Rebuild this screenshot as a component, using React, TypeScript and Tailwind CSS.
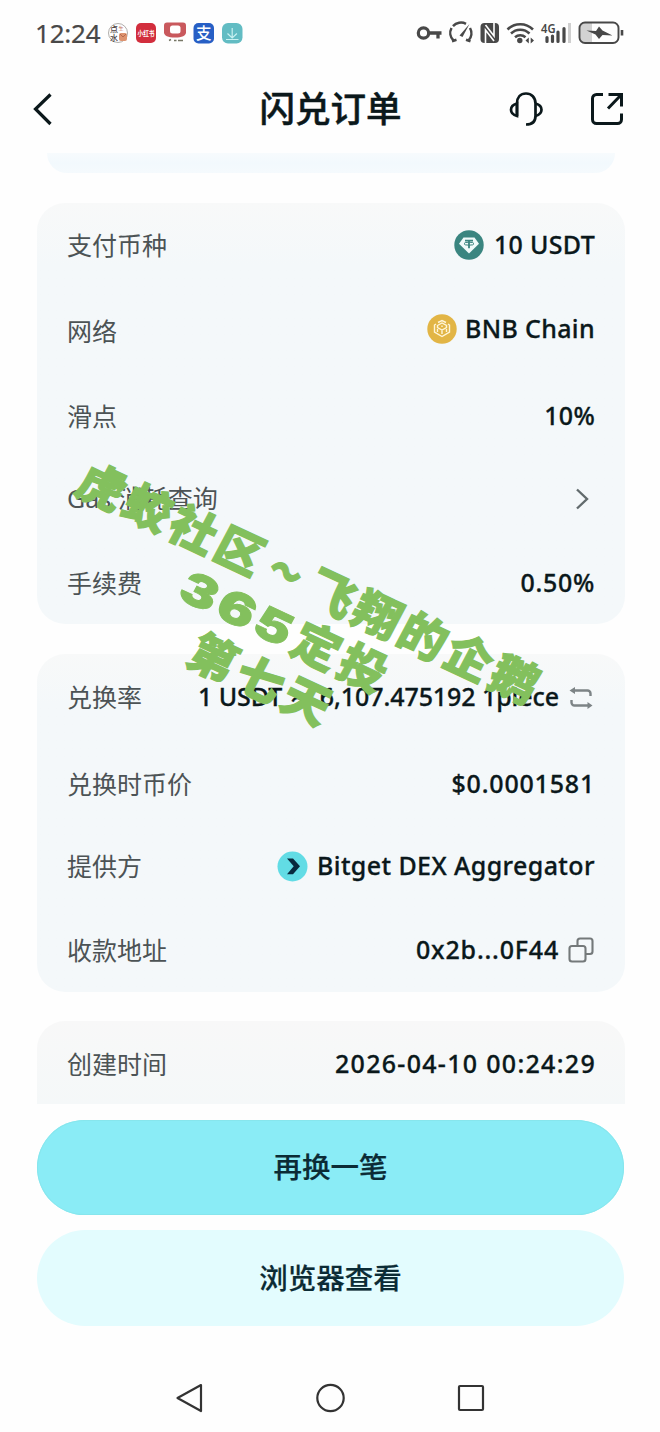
import type { ReactNode } from "react";

function Row({ label, h, children }: { label: string; h: string; children: ReactNode }) {
  return (
    <div className={`flex shrink-0 items-center justify-between ${h}`}>
      <span className="whitespace-nowrap text-[25px] leading-none text-[#4c5355]">{label}</span>
      <div className="-mt-px flex items-center whitespace-nowrap text-[25px] font-medium leading-none text-[#0b181b] [-webkit-text-stroke:0.3px]">
        {children}
      </div>
    </div>
  );
}

function StatusBar() {
  return (
    <div className="flex h-[66px] shrink-0 items-center pl-[35px] text-[#484848]">
      <span className="w-[72px] whitespace-nowrap font-['Noto_Sans'] text-[26px] leading-none tracking-[-0.2px] [-webkit-text-stroke:0.2px]">12:24</span>
      <svg width="140" height="24" viewBox="0 0 140 24" className="shrink-0">
        <circle cx="11" cy="12" r="9.5" fill="#fff" stroke="#8e8986" strokeWidth=".7" />
        <text x="3" y="11" fontSize="8" fontWeight="500" fill="#493d3d" fontFamily="Noto Sans CJK SC">点</text>
        <text x="3" y="20" fontSize="8" fontWeight="500" fill="#493d3d" fontFamily="Noto Sans CJK SC">水</text>
        <text x="11.5" y="9" fontSize="5" fill="#c36b60" fontFamily="Noto Sans CJK SC">生</text>
        <rect x="12" y="12" width="8" height="8" rx="2" fill="#dd936f" />
        <path d="M13 13l3 3 3-3" stroke="#b8694d" strokeWidth="1" fill="none" />
        <rect x="29" y="2" width="20" height="20" rx="5" fill="#d22e3d" />
        <text x="30.5" y="14.6" fontSize="7" fontWeight="700" fill="#fff" fontFamily="Noto Sans CJK SC" textLength="17" lengthAdjust="spacingAndGlyphs">小红书</text>
        <path d="M60 1.500h16a3 3 0 0 1 3 3v7c0 3-4 5-11 5s-11-2-11-5v-7a3 3 0 0 1 3-3z" fill="#c9595d" />
        <rect x="63" y="4.500" width="10.500" height="8" rx="2.500" fill="#fff" />
        <path d="M62 19.500l2-1M67 19.500h2.500M71 19.500h5" stroke="#776" strokeWidth="1.400" />
        <rect x="86.500" y="2" width="20.500" height="20.500" rx="5" fill="#275fc5" />
        <text x="89" y="17.500" fontSize="15.500" fontWeight="500" fill="#fff" fontFamily="Noto Sans CJK SC">支</text>
        <rect x="115" y="2" width="20.500" height="20.500" rx="6" fill="#62bcc3" />
        <path d="M125.200 7v10M120.500 12.500l4.700 4.500 4.700-4.500M119 18.500h12.500" stroke="#c9f1f1" strokeWidth="1.200" fill="none" />
      </svg>
      <svg width="212" height="28" viewBox="0 0 212 28" className="ml-[165px] shrink-0" fill="none" stroke="#484848">
        <circle cx="11.500" cy="14" r="5.200" strokeWidth="3.200" />
        <path d="M17 14h12.500M26 14v5.500" strokeWidth="3.300" />
        <path d="M41.500 21.500a10.500 10.500 0 0 1-2-12.500M41 7.200A10.800 10.800 0 0 1 54 4.800M58 9a10.500 10.500 0 0 1-1.500 12.500M40 22.300l4.500-1.500M58.500 22.300L54 20.800" strokeWidth="2.500" />
        <path d="M47.500 16.500L57.500 5l-7 13z" fill="#484848" stroke="none" />
        <rect x="68.500" y="4" width="18.500" height="20" rx="4" fill="#484848" stroke="none" />
        <path d="M73.500 24V11l8.500 11M82 4v13L73.500 6" stroke="#fff" strokeWidth="1.600" />
        <path d="M95.500 10.500a18 18 0 0 1 25.500 0M99 14.500a13 13 0 0 1 18.500 0M103 18.200a8 8 0 0 1 10.500 0" strokeWidth="2.500" />
        <circle cx="107.800" cy="21.500" r="2.700" fill="#484848" stroke="none" />
        <path d="M113.500 21.500l3.300-3v6zM122 21.500l-3.300-3v6z" fill="#484848" stroke="none" />
        <text x="129" y="13.500" fontSize="12.500" fontWeight="600" fill="#484848" stroke="none" fontFamily="Noto Sans" textLength="14.500" lengthAdjust="spacingAndGlyphs">4G</text>
        <path d="M135 18.500v4M140.500 17v5.500M146 13v9.500M152 9.500v13" strokeWidth="3.200" strokeLinecap="round" />
        <path d="M157.500 4v20" stroke="#cfcfcf" strokeWidth="3" />
        <path d="M180 4h-7a5 5 0 0 0-5 5v10a5 5 0 0 0 5 5h7z" fill="#d2d2d2" stroke="none" />
        <rect x="167.500" y="3.500" width="39" height="20.500" rx="5.500" strokeWidth="1.900" />
        <path d="M174.500 11.500L184 12l3-4.500 3.500 4 10 5-10-.5-3.500 4-3.500-4.500z" fill="#484848" stroke="none" />
        <path d="M210 11v5.500" strokeWidth="2.600" />
      </svg>
    </div>
  );
}

function Header() {
  return (
    <header className="flex h-[85px] shrink-0 items-center justify-between pl-[32px] pr-[36px] text-[#0b181b]">
      <svg width="92" height="36" viewBox="0 0 92 36" fill="none" stroke="currentColor" strokeWidth="3.200">
        <path d="M18.500 3.500L3.500 18l15 15" />
      </svg>
      <h1 className="ml-[31px] whitespace-nowrap text-[35.500px] font-medium leading-none [-webkit-text-stroke:0.5px]">闪兑订单</h1>
      <svg width="118" height="40" viewBox="0 0 118 40" fill="none" stroke="currentColor" strokeWidth="2.700">
        <path d="M11 27V14.500C11 8.500 14.500 4.500 20 4.500S29.500 8.500 29.500 14.500V27c0 5.500-3.500 8.500-9.500 8.500" />
        <path d="M11 14.500c-3.500 1-6 3.300-6 6.200S7.500 26 11 27zM29.500 14.500c3.500 1 6 3.300 6 6.200s-2.500 5.300-6 6.300" />
        <path d="M97 5.500h-6.500a4 4 0 0 0-4 4v21a4 4 0 0 0 4 4h21a4 4 0 0 0 4-4V24.500" strokeWidth="3" />
        <path d="M102.500 5.500h13v12M115 6l-13 13.500" strokeWidth="3" />
      </svg>
    </header>
  );
}

function Watermark() {
  return (
    <div className="pointer-events-none absolute left-[20px] top-[550px] flex h-[162px] w-[530px] rotate-[25deg] flex-col text-[47px] font-black text-[#83c05d]">
      <div className="-skew-x-3 text-center">
        <p className="h-[54px] whitespace-nowrap leading-[54px] tracking-[3.600px] [-webkit-text-stroke:1.200px]">
          虎蛟社区<span className="inline-block scale-x-70 scale-y-90">～</span>飞翔的企鹅
        </p>
        <p className="flex h-[54px] items-center justify-center pl-[11px] leading-[54px] tracking-[4px] [-webkit-text-stroke:1px]">
          <span className="mr-[11px] inline-block scale-x-118 scale-y-95 font-['Inter'] tracking-[3px]">365</span>
          <span>定投</span>
        </p>
        <p className="h-[54px] pl-[6px] leading-[54px] tracking-[4.500px] [-webkit-text-stroke:1.200px]">第七天</p>
      </div>
    </div>
  );
}

export default function App() {
  return (
    <div className="relative flex h-[1432px] w-[660px] flex-col overflow-hidden bg-[#fefefe] font-['Noto_Sans','Noto_Sans_CJK_SC',sans-serif]">
      <StatusBar />
      <Header />
      <main className="mt-[2px] flex h-[951px] shrink-0 flex-col overflow-hidden pl-[37px] pr-[35px]">
        <div className="mx-[10px] h-[20px] shrink-0 rounded-b-[20px] bg-linear-to-b from-[#f7fbfd] via-[#f2f9fd] to-[#f5fafd]" />
        <section className="mt-[30px] flex h-[421px] shrink-0 flex-col rounded-[28px] bg-linear-to-b from-[#f8f9f9] via-[#f4f8fa] via-15% to-[#f4f8fa] px-[30px]">
          <Row label="支付币种" h="h-[84px]">
            <svg width="30" height="30" viewBox="0 0 30 30" className="mr-[10px] mt-px">
              <circle cx="15" cy="15" r="14.700" fill="#3a8580" />
              <path d="M9.500 7.500h11l4.500 6.200L15 23.500 5 13.700z" fill="#effafa" />
              <path d="M11 10.700h8M15 10.700v7.500" stroke="#3a8580" strokeWidth="1.800" />
              <ellipse cx="15" cy="13.700" rx="5" ry="1.500" fill="none" stroke="#3a8580" />
            </svg>
            <span className="tracking-[0.3px]">10 USDT</span>
          </Row>
          <Row label="网络" h="h-[88px]">
            <svg width="30" height="30" viewBox="0 0 30 30" className="mr-[8px] -mt-[3px]">
              <circle cx="15" cy="15" r="14.700" fill="#e2b545" />
              <g fill="none" stroke="#fff5d8" strokeWidth="1.400">
                <path d="M11 8.500l4-2 4 2M21 10l1.500 1v7L15 22.500 7.500 18v-7L9 10" />
                <path d="M10.500 11.500L15 9l4.500 2.500v2L15 16l-4.500-2.500zM15 16v4M10.500 15v3M19.500 15v3M15 11.500v1.500" />
              </g>
            </svg>
            <span className="-mt-[4px] tracking-[0.35px]">BNB Chain</span>
          </Row>
          <Row label="滑点" h="h-[82px]"><span className="tracking-[0.3px]">10%</span></Row>
          <Row label="Gas 消耗查询" h="h-[82px]">
            <svg width="16" height="26" viewBox="0 0 16 26" className="mr-[5px] mt-[2px]" fill="none" stroke="#626b6d" strokeWidth="2.400">
              <path d="M3 3.500l10 9.500L3 22.500" />
            </svg>
          </Row>
          <Row label="手续费" h="h-[88px]"><span className="tracking-[0.7px]">0.50%</span></Row>
        </section>
        <section className="mt-[30px] flex h-[338px] shrink-0 flex-col rounded-[28px] bg-linear-to-b from-[#f8f9f9] via-[#f4f8fa] via-15% to-[#f4f8fa] px-[30px]">
          <Row label="兑换率" h="h-[86px]">
            <span className="tracking-[-0.080px]">1 USDT ≈ 6,107.475192 1piece</span>
            <svg width="26" height="26" viewBox="0 0 26 26" className="ml-[10px] mt-[2px]" fill="none" stroke="#7d8486" strokeWidth="2.400">
              <path d="M5 5.500h13.500a3 3 0 0 1 3 3V11M20 20.500H5.500a3 3 0 0 1-3-3V15" />
              <path d="M6 2v7L.5 5.500zM18.500 17v7l5-3.500z" fill="#7d8486" stroke="none" />
            </svg>
          </Row>
          <Row label="兑换时币价" h="h-[88px]"><span className="tracking-[0.800px]">$0.0001581</span></Row>
          <Row label="提供方" h="h-[76px]">
            <svg width="31" height="31" viewBox="0 0 31 31" className="mr-[9px] mt-px">
              <circle cx="15.500" cy="15.500" r="15" fill="#62dce5" />
              <path d="M10 7.500h6l7 7.800-7 8h-6l6.700-8z" fill="#082a3e" />
            </svg>
            <span className="tracking-[0.400px]">Bitget DEX Aggregator</span>
          </Row>
          <Row label="收款地址" h="h-[92px]">
            <span className="tracking-[0.800px]">0x2b...0F44</span>
            <svg width="26" height="26" viewBox="0 0 26 26" className="ml-[9px] mr-px mt-px" fill="none" stroke="#74797a" strokeWidth="2.100">
              <rect x="1.500" y="9" width="16" height="15.500" rx="2.500" />
              <path d="M9.500 9V4A2.500 2.500 0 0 1 12 1.500h10A2.500 2.500 0 0 1 24.500 4v10.500A2.500 2.500 0 0 1 22 17h-4.500" />
            </svg>
          </Row>
        </section>
        <section className="mt-[29px] flex h-[110px] shrink-0 flex-col rounded-t-[28px] bg-linear-to-b from-[#f8f8f8] to-[#f4f8f9] px-[30px]">
          <Row label="创建时间" h="h-[86px]"><span className="-mr-px tracking-[1.300px]">2026-04-10 00:24:29</span></Row>
        </section>
      </main>
      <div className="mt-[16px] flex shrink-0 flex-col gap-[15px] pl-[37px] pr-[36px] text-[28.500px] font-medium text-[#0b2b35] [-webkit-text-stroke:0.2px]">
        <button className="h-[95px] rounded-full bg-[#8aecf6] shadow-[inset_0_0_0_1px_#87e6ed]">再换一笔</button>
        <button className="h-[96px] rounded-full bg-[#e3fcfe]">浏览器查看</button>
      </div>
      <nav className="flex h-[106px] shrink-0 items-center justify-center pt-[38px]">
        <svg width="320" height="34" viewBox="0 0 320 34" fill="none" stroke="#333" strokeWidth="2.200" strokeLinejoin="round">
          <path d="M31 4L7.500 17 31 30z" />
          <circle cx="160.500" cy="17" r="13.200" />
          <rect x="289" y="5" width="24" height="24" rx="1" />
        </svg>
      </nav>
      <Watermark />
    </div>
  );
}
